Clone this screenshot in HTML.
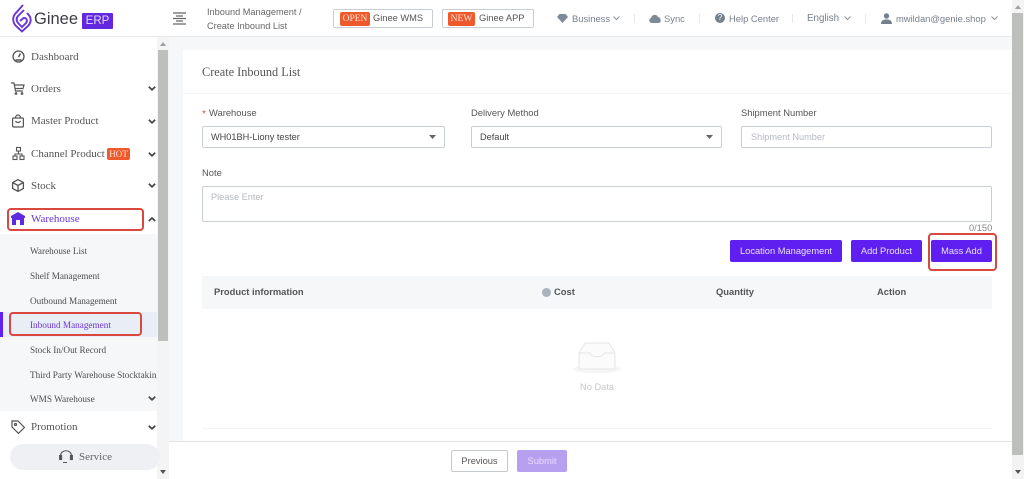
<!DOCTYPE html>
<html><head><meta charset="utf-8">
<style>
*{box-sizing:border-box}
html,body{margin:0;padding:0;width:1024px;height:479px;overflow:hidden;background:#fff;font-family:"Liberation Sans",sans-serif;color:#555}
#p{position:absolute;left:0;top:0;width:1024px;height:479px;overflow:hidden;filter:blur(.35px)}
.a{position:absolute;white-space:nowrap}
.s{font-family:"Liberation Serif",serif}
.nav{font-family:"Liberation Serif",serif;font-size:11px;color:#555;position:absolute;left:31px;white-space:nowrap}
.sub{font-family:"Liberation Serif",serif;font-size:9.200px;color:#4c4c4c;position:absolute;left:30px;white-space:nowrap}
.top{font-size:9.400px;color:#78808c;position:absolute;white-space:nowrap}
.lab{font-size:9.400px;color:#555;position:absolute;white-space:nowrap}
.inp{position:absolute;background:#fff;border:1px solid #c9ced6;border-radius:2px;font-size:9.200px;line-height:11px;white-space:nowrap}
.btn{position:absolute;background:#5f1ff0;color:#e8e0ff;font-size:9.300px;border-radius:2px;text-align:center;height:22px;line-height:23px;top:240px}
.red{position:absolute;border:2.500px solid #d9483f;border-radius:4px}
.th{position:absolute;top:286px;font-size:9.400px;font-weight:bold;color:#555;white-space:nowrap}
svg{position:absolute;overflow:visible}
</style></head><body><div id="p">

<!-- backgrounds -->
<div class="a" style="left:169px;top:37px;width:843px;height:442px;background:#f5f7f9"></div>
<div class="a" style="left:183px;top:50px;width:829px;height:391px;background:#fff"></div>
<div class="a" style="left:183px;top:93px;width:829px;height:1px;background:#f4f5f7"></div>
<div class="a" style="left:169px;top:441px;width:843px;height:38px;background:#fff;border-top:1px solid #e4e4e4"></div>
<div class="a" style="left:0;top:0;width:1024px;height:37px;background:#fff;border-bottom:1px solid #e8e8e8"></div>

<!-- logo -->
<svg style="left:12px;top:4px" width="20" height="28" viewBox="0 0 20 28" fill="none" stroke="#6b35d8" stroke-width="1.900">
<path d="M11 1 L3 10 C0 14 1 19 4 22 L10 27.500 L16 22 C19 19 19.500 15 17.500 12 L15 9"/>
<path d="M12 6 L6 12 C3.500 15 5 18 7 20 L10 23 L14 19 C16 16.500 14.500 13.500 11.500 14 L8 17"/>
</svg>
<div class="a" style="left:34px;top:10px;font-size:16.500px;color:#3c3c46">Ginee</div>
<div class="a" style="left:82px;top:13px;width:31px;height:16px;background:#6228e0;border-radius:1px;color:#e3d9ff;font-size:11.500px;line-height:16px;text-align:center">ERP</div>

<!-- hamburger -->
<svg style="left:173px;top:12px" width="13" height="13" stroke="#666" stroke-width="1.200"><path d="M0 1H13M3 4H10M0 6.500H13M3 9H10M0 12H13"/></svg>

<div class="a" style="left:207px;top:5px;font-size:9.200px;line-height:14px;color:#666">Inbound Management /<br>Create Inbound List</div>

<!-- header chips -->
<div class="a" style="left:333px;top:9px;width:100px;height:19px;border:1px solid #c9ced6;border-radius:2px"></div>
<div class="a s" style="left:340px;top:12px;width:30px;height:14px;background:#ee5a2b;border-radius:2px;color:#ffe4da;font-size:9.500px;line-height:15px;text-align:center">OPEN</div>
<div class="a" style="left:373px;top:13px;font-size:9.300px;color:#555">Ginee WMS</div>
<div class="a" style="left:442px;top:9px;width:92px;height:19px;border:1px solid #c9ced6;border-radius:2px"></div>
<div class="a s" style="left:448px;top:12px;width:27px;height:14px;background:#ee5a2b;border-radius:2px;color:#ffe4da;font-size:9.500px;line-height:15px;text-align:center">NEW</div>
<div class="a" style="left:479px;top:13px;font-size:9.300px;color:#555">Ginee APP</div>

<!-- header right -->
<svg style="left:557px;top:14px" width="11" height="9" fill="#7d8a98"><path d="M2.500 0H8.500L11 3L5.500 9L0 3Z"/></svg>
<div class="top" style="left:572px;top:13px">Business</div>
<svg style="left:613px;top:16px" width="7" height="5" fill="none" stroke="#8a929c"><path d="M.5 .5L3.500 3.500L6.500 .5"/></svg>
<div class="a" style="left:634px;top:14px;width:1px;height:9px;background:#e4e6e9"></div>
<svg style="left:649px;top:14px" width="12" height="9" fill="#7d8a98"><path d="M3 9C0 9 -1 5 2 4C3 0 8 0 9 3C12 3 13 9 9.500 9Z"/></svg>
<div class="top" style="left:664px;top:13px">Sync</div>
<div class="a" style="left:699px;top:14px;width:1px;height:9px;background:#e4e6e9"></div>
<div class="a" style="left:715px;top:13px;width:10px;height:10px;border-radius:50%;background:#74808e;color:#fff;font-size:8px;line-height:10px;text-align:center">?</div>
<div class="top" style="left:729px;top:13px">Help Center</div>
<div class="a" style="left:792px;top:14px;width:1px;height:9px;background:#e4e6e9"></div>
<div class="top" style="left:807px;top:13px;font-size:9.800px">English</div>
<svg style="left:844px;top:16px" width="7" height="5" fill="none" stroke="#8a929c"><path d="M.5 .5L3.500 3.500L6.500 .5"/></svg>
<div class="a" style="left:865px;top:14px;width:1px;height:9px;background:#e4e6e9"></div>
<svg style="left:881px;top:13px" width="11" height="11" fill="#74808e"><circle cx="5.500" cy="3" r="2.700"/><path d="M0 11C0 7 3 6.500 5.500 6.500S11 7 11 11Z"/></svg>
<div class="top" style="left:896px;top:13px">mwildan@genie.shop</div>
<svg style="left:991px;top:16px" width="7" height="5" fill="none" stroke="#8a929c"><path d="M.5 .5L3.500 3.500L6.500 .5"/></svg>

<!-- sidebar -->
<div class="a" style="left:0;top:37px;width:157px;height:442px;background:#fff"></div>
<div class="a" style="left:0;top:234px;width:157px;height:177px;background:#f5f7f9"></div>
<div class="a" style="left:0;top:312px;width:157px;height:25px;background:#e9edf5"></div>
<div class="a" style="left:0;top:312px;width:3px;height:25px;background:#5f1ff0"></div>

<div class="nav" style="top:50px;margin-top:1px">Dashboard</div>
<div class="nav" style="top:83px">Orders</div>
<div class="nav" style="top:115px">Master Product</div>
<div class="nav" style="top:148px">Channel Product</div>
<div class="a s" style="left:107px;top:148px;width:23px;height:12px;background:#ee5a2b;border-radius:2px;color:#ffe4da;font-size:9px;line-height:12px;text-align:center">HOT</div>
<div class="nav" style="top:180px">Stock</div>
<div class="nav" style="top:213px;color:#6a35d8">Warehouse</div>
<div class="sub" style="top:246px">Warehouse List</div>
<div class="sub" style="top:271px">Shelf Management</div>
<div class="sub" style="top:296px">Outbound Management</div>
<div class="sub" style="top:320px;color:#6a35d8">Inbound Management</div>
<div class="sub" style="top:345px">Stock In/Out Record</div>
<div class="a" style="left:30px;top:370px;width:127px;height:14px;overflow:hidden;font-family:'Liberation Serif',serif;font-size:9.200px;color:#4c4c4c">Third Party Warehouse Stocktaking</div>
<div class="sub" style="top:394px">WMS Warehouse</div>
<div class="nav" style="top:421px">Promotion</div>

<!-- sidebar icons -->
<svg style="left:12px;top:50px" width="13" height="13" fill="none" stroke="#555" stroke-width="1.300"><circle cx="6.500" cy="6.500" r="5.500"/><path d="M6.500 7L8.500 3.500M3.500 10H9.500" stroke-width="1.500"/></svg>
<svg style="left:11px;top:82px" width="14" height="13" fill="none" stroke="#555" stroke-width="1.200"><path d="M0 1H3L4.500 9H12M3.500 3H13L12 6.500H4"/><circle cx="5" cy="11.500" r=".8"/><circle cx="11" cy="11.500" r=".8"/></svg>
<svg style="left:12px;top:114px" width="12" height="14" fill="none" stroke="#555" stroke-width="1.200"><rect x=".6" y="4" width="10.800" height="9" rx="1"/><path d="M3.500 4C3.500 0 8.500 0 8.500 4M3.500 7C4.500 9 7.500 9 8.500 7"/></svg>
<svg style="left:12px;top:147px" width="13" height="13" fill="none" stroke="#555" stroke-width="1.100"><rect x="4.500" y=".5" width="4" height="3.500"/><rect x="1" y="9" width="4" height="3.500"/><rect x="8" y="9" width="4" height="3.500"/><path d="M6.500 4V7M3 9V7H10V9"/></svg>
<svg style="left:12px;top:179px" width="12" height="13" fill="none" stroke="#555" stroke-width="1.300"><path d="M6 .6L11.400 3.500V9.500L6 12.400L.6 9.500V3.500ZM.6 3.500L6 6.500L11.400 3.500M6 6.500V12.400"/></svg>
<svg style="left:11px;top:212px" width="14" height="13" fill="#5f2ae0"><path d="M7 0L14 4V6H13V13H9V8H5V13H1V6H0V4Z"/></svg>
<svg style="left:11px;top:420px" width="14" height="14" fill="none" stroke="#555" stroke-width="1.200"><path d="M1 1H7L13.400 7.500L7.500 13.400L1 7Z"/><circle cx="4.500" cy="4.500" r="1"/></svg>

<!-- chevrons -->
<svg style="left:148px;top:86px" width="8" height="95" fill="none" stroke="#444" stroke-width="1.700"><path d="M.8 .8L4 3.800L7.200 .8M.8 33.800L4 36.800L7.200 33.800M.8 66.800L4 69.800L7.200 66.800M.8 97.800L4 100.800L7.200 97.800"/></svg>
<svg style="left:148px;top:217px" width="8" height="5" fill="none" stroke="#444" stroke-width="1.700"><path d="M.8 4L4 1L7.200 4"/></svg>
<svg style="left:148px;top:396px" width="8" height="5" fill="none" stroke="#444" stroke-width="1.700"><path d="M.8 .8L4 3.800L7.200 .8"/></svg>
<svg style="left:148px;top:425px" width="8" height="5" fill="none" stroke="#444" stroke-width="1.700"><path d="M.8 .8L4 3.800L7.200 .8"/></svg>

<!-- sidebar scrollbar -->
<div class="a" style="left:157px;top:37px;width:12px;height:442px;background:#f4f4f5"></div>
<div class="a" style="left:158px;top:50px;width:10px;height:291px;background:#bdbfbd"></div>
<svg style="left:160px;top:42px" width="6" height="4" fill="#a0a0a0"><path d="M3 0L6 4H0Z"/></svg>
<svg style="left:160px;top:470px" width="6" height="4" fill="#555"><path d="M3 4L6 0H0Z"/></svg>

<!-- service -->
<div class="a" style="left:10px;top:444px;width:150px;height:26px;background:#eef0f4;border-radius:13px"></div>
<svg style="left:59px;top:449px" width="14" height="15" fill="none" stroke="#555" stroke-width="1.100"><path d="M1.500 10V7C1.500 0 12.500 0 12.500 7V10M4 13.500H8"/><rect x=".6" y="6.500" width="2" height="4"/><rect x="11.400" y="6.500" width="2" height="4"/></svg>
<div class="a s" style="left:79px;top:451px;font-size:11px;color:#666">Service</div>

<!-- red highlights -->
<div class="red" style="left:7px;top:208px;width:137px;height:23px"></div>
<div class="red" style="left:9px;top:312px;width:133px;height:24px"></div>

<!-- form -->
<div class="a s" style="left:202px;top:65px;font-size:12.300px;color:#555">Create Inbound List</div>
<div class="a" style="left:202px;top:109px;font-size:10px;color:#d9534f">*</div>
<div class="lab" style="left:209px;top:107px">Warehouse</div>
<div class="lab" style="left:471px;top:107px">Delivery Method</div>
<div class="lab" style="left:741px;top:107px">Shipment Number</div>

<div class="inp" style="left:202px;top:126px;width:243px;height:22px;padding:5px 8px;color:#444">WH01BH-Liony tester</div>
<svg style="left:429px;top:135px" width="7" height="4" fill="#666"><path d="M0 0H7L3.500 4Z"/></svg>
<div class="inp" style="left:471px;top:126px;width:251px;height:22px;padding:5px 8px;color:#444">Default</div>
<svg style="left:706px;top:135px" width="7" height="4" fill="#666"><path d="M0 0H7L3.500 4Z"/></svg>
<div class="inp" style="left:741px;top:126px;width:251px;height:22px;padding:5px 9px;color:#b5b9c0">Shipment Number</div>

<div class="lab" style="left:202px;top:167px">Note</div>
<div class="inp" style="left:202px;top:186px;width:790px;height:36px;padding:5px 8px;color:#b5b9c0">Please Enter</div>
<div class="a" style="left:969px;top:223px;font-size:9.300px;color:#888">0/150</div>

<div class="btn" style="left:730px;width:112px">Location Management</div>
<div class="btn" style="left:851px;width:71px">Add Product</div>
<div class="btn" style="left:931px;width:61px">Mass Add</div>
<div class="red" style="left:928px;top:233px;width:69px;height:38px"></div>

<!-- table -->
<div class="a" style="left:202px;top:276px;width:790px;height:33px;background:#f5f7f9"></div>
<div class="th" style="left:214px">Product information</div>
<div class="a" style="left:542px;top:288px;width:9px;height:9px;border-radius:50%;background:#a9b2bf"></div>
<div class="th" style="left:554px">Cost</div>
<div class="th" style="left:716px">Quantity</div>
<div class="th" style="left:877px">Action</div>

<!-- empty -->
<svg style="left:573px;top:342px" width="48" height="32" fill="none">
<ellipse cx="24" cy="27" rx="24" ry="4" fill="#f5f5f5"/>
<path d="M6 11L12 1H36L42 11V27H6Z" fill="#fbfbfb" stroke="#e6e6e6"/>
<path d="M6 11H17C18 16 30 16 31 11H42" stroke="#e6e6e6"/>
</svg>
<div class="a" style="left:580px;top:382px;font-size:9.300px;color:#c8c8c8">No Data</div>
<div class="a" style="left:202px;top:428px;width:790px;height:1px;background:#f3f3f3"></div>

<!-- footer -->
<div class="a" style="left:451px;top:450px;width:57px;height:22px;border:1px solid #c4c9d0;border-radius:2px;background:#fff;font-size:9.300px;line-height:21px;text-align:center;color:#555">Previous</div>
<div class="a" style="left:517px;top:450px;width:50px;height:22px;border-radius:2px;background:#b8a0f0;font-size:9.300px;line-height:23px;text-align:center;color:#e6dcff">Submit</div>

<!-- page scrollbar -->
<div class="a" style="left:1012px;top:0;width:12px;height:479px;background:#f3f3f3"></div>
<div class="a" style="left:1012px;top:13px;width:11px;height:442px;background:#bdbfbd"></div>
<svg style="left:1015px;top:5px" width="6" height="4" fill="#a0a0a0"><path d="M3 0L6 4H0Z"/></svg>
<svg style="left:1015px;top:470px" width="6" height="4" fill="#555"><path d="M3 4L6 0H0Z"/></svg>

</div></body></html>
